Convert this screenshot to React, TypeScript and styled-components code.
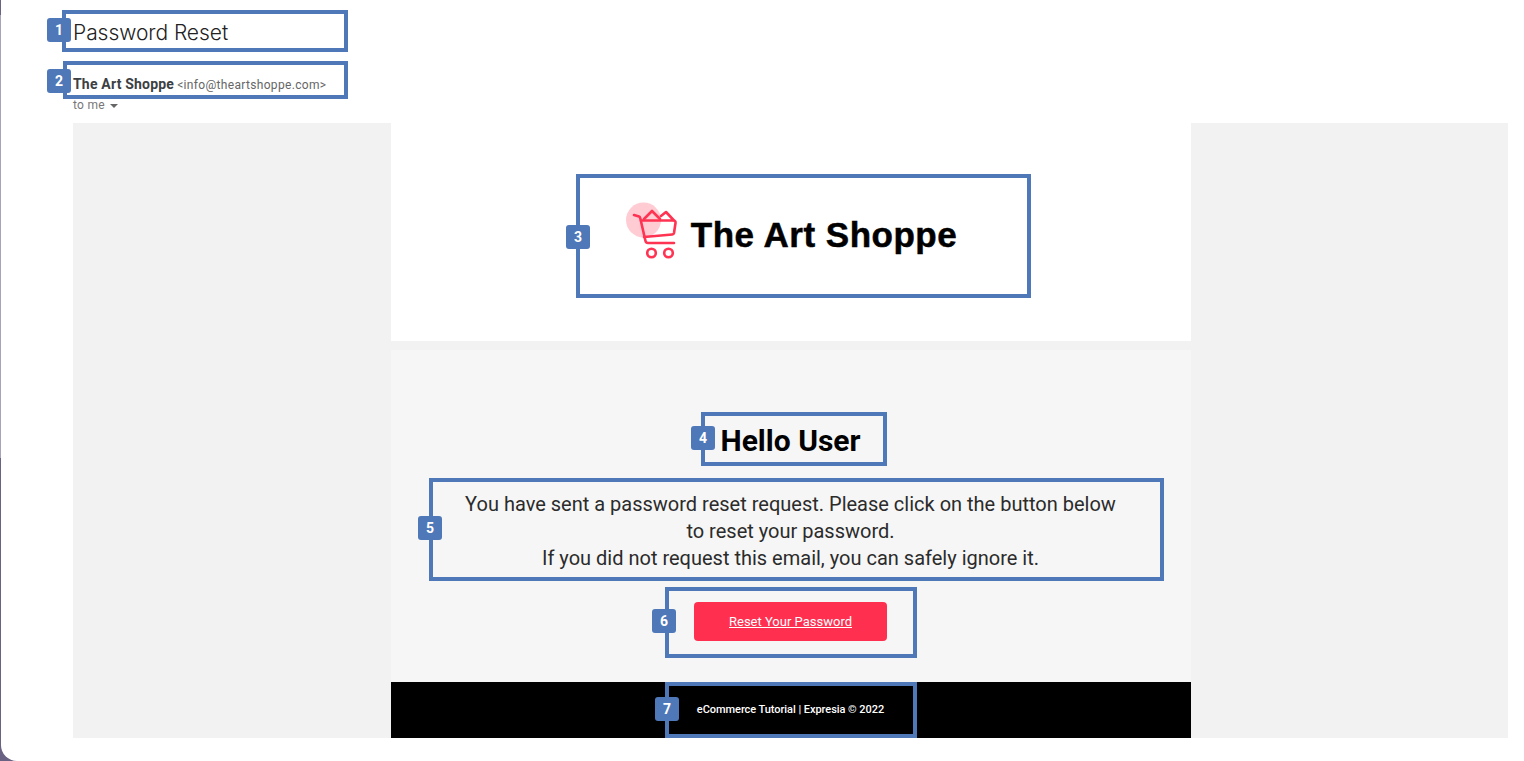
import styled, { createGlobalStyle } from "styled-components";

const GlobalStyle = createGlobalStyle`
	html, body {
		margin: 0;
		padding: 0;
		height: 100%;
		overflow: hidden;
	}
	body {
		font-family: Roboto, "Liberation Sans", sans-serif;
	}
`;

const Desktop = styled.div`
	position: relative;
	width: 1524px;
	height: 761px;
	overflow: hidden;
	background: linear-gradient(
		to bottom,
		#6a6282 0,
		#6a6282 15px,
		#a8a2ba 15px,
		#a8a2ba 458px,
		#6a6282 458px,
		#6a6282 100%
	);
`;

const Page = styled.main`
	box-sizing: border-box;
	height: 761px;
	margin-left: 1px;
	padding: 0 16px 0 72px;
	background: #fff;
	border-bottom-left-radius: 16px;
	display: flex;
	flex-direction: column;
`;

const Subject = styled.h1`
	margin: 21px 0 0;
	height: 24px;
	font-family: Inter, "Open Sans", sans-serif;
	font-size: 21px;
	line-height: 24px;
	font-weight: 300;
	letter-spacing: -0.05px;
	color: #222;
`;

const Sender = styled.div`
	margin-top: 30px;
	height: 18px;
	line-height: 18px;
	font-size: 14px;
	white-space: nowrap;
`;

const SenderName = styled.span`
	font-weight: 700;
	color: #3c4043;
	letter-spacing: 0.2px;
`;

const SenderMail = styled.span`
	font-size: 12px;
	color: #666;
	margin-left: 3px;
	letter-spacing: 0.33px;
`;

const Recipient = styled.div`
	display: flex;
	align-items: center;
	gap: 5px;
	margin-top: 5px;
	height: 14px;
	font-size: 12px;
	letter-spacing: 0.25px;
	color: #777;
`;

const Caret = styled.span`
	width: 0;
	height: 0;
	margin-top: 2px;
	border-left: 4.5px solid transparent;
	border-right: 4.5px solid transparent;
	border-top: 4px solid #666;
`;

const MailBody = styled.section`
	margin-top: 11px;
	height: 615px;
	background: #f2f2f2;
	display: flex;
	justify-content: center;
`;

const MailColumn = styled.div`
	width: 800px;
	display: flex;
	flex-direction: column;
`;

const LogoPanel = styled.div`
	height: 218px;
	background: #fff;
	display: flex;
	justify-content: center;
	align-items: center;
	gap: 13px;
	padding: 2px 0 0 2px;
	box-sizing: border-box;
`;

const LogoText = styled.span`
	padding-top: 4px;
	font-family: "Liberation Sans", Arial, sans-serif;
	font-size: 35px;
	font-weight: 700;
	letter-spacing: 0.5px;
	-webkit-text-stroke: 0.5px #000;
	color: #000;
	white-space: nowrap;
`;

const Message = styled.div`
	margin-top: 9px;
	height: 332px;
	background: #f6f6f6;
	display: flex;
	flex-direction: column;
	align-items: center;
	padding-top: 73px;
	box-sizing: border-box;
`;

const Greeting = styled.h2`
	margin: 0;
	height: 36px;
	font-size: 30px;
	line-height: 36px;
	font-weight: 700;
	color: #000;
`;

const Paragraph = styled.p`
	margin: 32px 0 0;
	width: 660px;
	font-size: 20px;
	line-height: 27px;
	text-align: center;
	color: #2b2b2b;
`;

const ResetButton = styled.a`
	margin-top: 30px;
	width: 193px;
	height: 39px;
	border-radius: 4px;
	background: #ff2f50;
	color: #fff;
	font-size: 13px;
	font-weight: 400;
	line-height: 39px;
	text-align: center;
	text-decoration: underline;
`;

const Footer = styled.footer`
	box-sizing: border-box;
	height: 56px;
	padding-bottom: 2px;
	background: #000;
	color: #fff;
	font-size: 11px;
	font-weight: 500;
	letter-spacing: -0.05px;
	display: flex;
	align-items: center;
	justify-content: center;
`;

const Callout = styled.div<{ $x: number; $y: number; $w: number; $h: number }>`
	position: absolute;
	left: ${p => p.$x}px;
	top: ${p => p.$y}px;
	width: ${p => p.$w}px;
	height: ${p => p.$h}px;
	box-sizing: border-box;
	border: 4px solid #4f78b8;
`;

const Badge = styled.span<{ $x: number; $y: number }>`
	position: absolute;
	left: ${p => p.$x}px;
	top: ${p => p.$y}px;
	width: 24px;
	height: 24px;
	border-radius: 3px;
	background: #4f78b8;
	color: #fff;
	font-size: 14px;
	font-weight: 700;
	line-height: 24px;
	text-align: center;
`;

// annotation frames drawn over the mail, badge coordinates are page based
const callouts = [
	{ n: 1, x: 62, y: 10, w: 286, h: 42, bx: 47, by: 18 },
	{ n: 2, x: 63, y: 61, w: 285, h: 38, bx: 47, by: 69 },
	{ n: 3, x: 576, y: 174, w: 455, h: 124, bx: 566, by: 225 },
	{ n: 4, x: 701, y: 412, w: 186, h: 54, bx: 691, by: 426 },
	{ n: 5, x: 429, y: 478, w: 735, h: 103, bx: 418, by: 516 },
	{ n: 6, x: 665, y: 587, w: 252, h: 71, bx: 652, by: 609 },
	{ n: 7, x: 665, y: 682, w: 252, h: 56, bx: 655, by: 697 }
];

function CartLogo() {
	return (
		<svg width="52" height="62" viewBox="0 0 52 62" fill="none">
			<circle cx="17.500" cy="18" r="17.500" fill="#ffccd3" />
			<g stroke="#ff3352" strokeWidth="2.600" strokeLinecap="round" strokeLinejoin="round">
				<path d="M8 13l5 1.500c.7.2 1 .7 1.200 1.500L19.500 39c.3 1.300 1 2 2.500 2H48" />
				<path d="M15 18.500H47.500c1.500 0 2.300 1 2 2.500L48 31c-.2 1-.8 1.400-1.800 1.500L18 35" />
				<path d="M18 17l8-8 8 8" />
				<path d="M35 14l5-4 7.500 8" />
				<circle cx="25.500" cy="51" r="4.300" />
				<circle cx="42.500" cy="51" r="4.300" />
			</g>
		</svg>
	);
}

export default function App() {
	return (
		<>
			<GlobalStyle />
			<Desktop>
				<Page>
					<Subject>Password Reset</Subject>
					<Sender>
						<SenderName>The Art Shoppe</SenderName>
						<SenderMail>&lt;info@theartshoppe.com&gt;</SenderMail>
					</Sender>
					<Recipient>
						to me <Caret />
					</Recipient>
					<MailBody>
						<MailColumn>
							<LogoPanel>
								<CartLogo />
								<LogoText>The Art Shoppe</LogoText>
							</LogoPanel>
							<Message>
								<Greeting>Hello User</Greeting>
								<Paragraph>
									You have sent a password reset request. Please click on the button below to
									reset your password.
									<br />
									If you did not request this email, you can safely ignore it.
								</Paragraph>
								<ResetButton>Reset Your Password</ResetButton>
							</Message>
							<Footer>eCommerce Tutorial | Expresia © 2022</Footer>
						</MailColumn>
					</MailBody>
				</Page>
				{callouts.map(c => (
					<Callout key={c.n} $x={c.x} $y={c.y} $w={c.w} $h={c.h} />
				))}
				{callouts.map(c => (
					<Badge key={c.n} $x={c.bx} $y={c.by}>
						{c.n}
					</Badge>
				))}
			</Desktop>
		</>
	);
}
